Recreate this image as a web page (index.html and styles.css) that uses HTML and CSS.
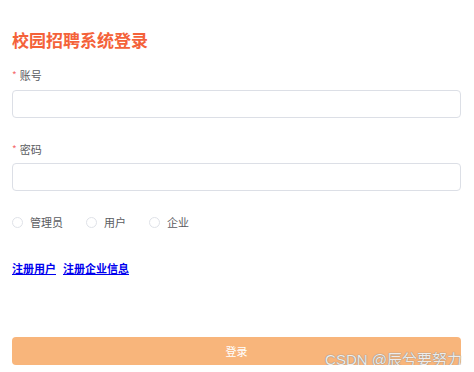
FILE: index.html
```html
<!DOCTYPE html>
<html lang="zh">
<head>
<meta charset="utf-8">
<title>校园招聘系统登录</title>
<link rel="stylesheet" href="styles.css">
</head>
<body>
<div class="page">
  <h1 class="title">校园招聘系统登录</h1>
  <form class="form">
    <div class="item item-first">
      <label class="label"><span class="star">*</span>账号</label>
      <input class="input" type="text">
    </div>
    <div class="item item-second">
      <label class="label"><span class="star">*</span>密码</label>
      <input class="input" type="password">
    </div>
    <div class="radios">
      <label class="radio"><span class="circle"></span><span class="radio-text">管理员</span></label>
      <label class="radio"><span class="circle"></span><span class="radio-text">用户</span></label>
      <label class="radio"><span class="circle"></span><span class="radio-text">企业</span></label>
    </div>
    <div class="links">
      <a class="link" href="#">注册用户</a>
      <a class="link" href="#">注册企业信息</a>
    </div>
    <div class="btn-wrap">
      <button class="btn" type="button">登录</button>
      <span class="watermark">CSDN @辰兮要努力</span>
    </div>
  </form>
</div>
</body>
</html>
```
FILE: styles.css
```css
* { box-sizing: border-box; }
html, body { margin: 0; padding: 0; background: #fff; }
body {
  font-family: "Noto Sans CJK SC", "Noto Sans", sans-serif;
  color: #606266;
}
.page { padding: 28px 13px 0 12px; }
.title {
  margin: 0;
  font-size: 17px;
  line-height: 24px;
  font-weight: 700;
  color: #f4623a;
}
.form { display: flex; flex-direction: column; }
.item { display: flex; flex-direction: column; }
.item-first { margin-top: 13px; }
.item-second { margin-top: 21px; }
.label {
  font-size: 11px;
  line-height: 20px;
  color: #5a5c61;
  display: flex;
  align-items: center;
}
.star { color: #f56c6c; margin-right: 3px; font-size: 10px; }
.item-first .label { margin-bottom: 5px; }
.item-second .label { margin-bottom: 4px; }
.input {
  height: 28px;
  width: 100%;
  border: 1px solid #dcdfe6;
  border-radius: 4px;
  outline: none;
  padding: 0 10px;
  font-size: 12px;
}
.radios {
  margin-top: 21px;
  display: flex;
  height: 20px;
  align-items: center;
}
.radio { display: flex; align-items: center; margin-right: 23px; }
.circle {
  width: 11px;
  height: 11px;
  border: 1px solid #dfe2e8;
  border-radius: 50%;
  display: inline-block;
}
.radio-text { margin-left: 7px; font-size: 11px; color: #5a5c61; line-height: 20px; }
.links {
  margin-top: 26px;
  display: flex;
  gap: 7px;
  height: 20px;
  align-items: center;
}
.link {
  color: #0000ee;
  font-size: 11px;
  font-weight: 700;
  text-decoration: underline;
}
.btn-wrap { margin-top: 59px; position: relative; }
.btn {
  width: 100%;
  height: 28px;
  border: none;
  border-radius: 4px;
  background: #f8b57b;
  color: #fff;
  font-family: "Noto Sans CJK SC", sans-serif;
  font-size: 11px;
}
.watermark {
  position: absolute;
  right: -1px;
  bottom: -4px;
  font-family: "Liberation Sans", "Noto Sans CJK SC", sans-serif;
  font-size: 15px;
  color: rgba(255, 255, 255, 0.85);
  text-shadow: 0 0 1px #8a8a8a, 0 0 1px #8a8a8a;
  white-space: nowrap;
}
```
